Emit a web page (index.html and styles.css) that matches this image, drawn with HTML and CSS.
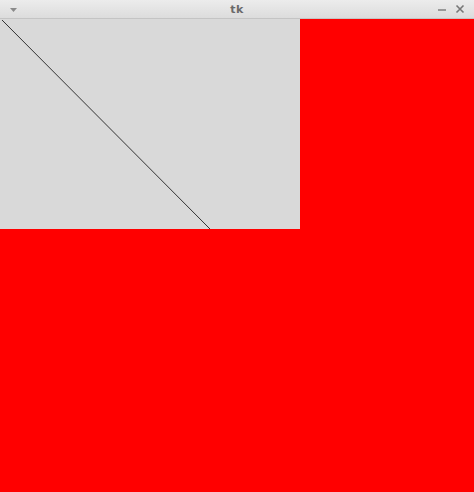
FILE: index.html
```html
<!DOCTYPE html>
<html>
<head>
<meta charset="utf-8">
<link rel="stylesheet" href="styles.css">
</head>
<body>
<div class="window">
  <div class="titlebar">
    <div class="menu-btn">
      <svg width="9" height="6" viewBox="0 0 9 6"><path d="M1 1 L8 1 L4.5 5 Z" fill="#8a8a8a"/></svg>
    </div>
    <div class="title">tk</div>
    <div class="controls">
      <svg width="10" height="10" viewBox="0 0 10 10"><path d="M1 6 H9" stroke="#777" stroke-width="1.4"/></svg>
      <svg width="10" height="10" viewBox="0 0 10 10"><path d="M1.5 1.5 L8.5 8.5 M8.5 1.5 L1.5 8.5" stroke="#777" stroke-width="1.6"/></svg>
    </div>
  </div>
  <div class="content">
    <div class="canvas">
      <svg width="300" height="210" viewBox="0 0 300 210"><line x1="2" y1="1" x2="210" y2="210" stroke="#333" stroke-width="1"/></svg>
    </div>
  </div>
</div>
</body>
</html>
```
FILE: styles.css
```css
html, body {
  margin: 0;
  padding: 0;
  width: 474px;
  height: 492px;
  overflow: hidden;
}
.window {
  width: 474px;
  height: 492px;
  display: flex;
  flex-direction: column;
  background: #ff0000;
}
.titlebar {
  height: 18px;
  flex: 0 0 18px;
  display: flex;
  align-items: center;
  justify-content: space-between;
  background: linear-gradient(#ececec, #dcdcdc);
  border-bottom: 1px solid #c4c4c4;
  font-family: "DejaVu Sans", sans-serif;
  font-weight: bold;
  font-size: 11px;
  color: #6a6a6a;
  position: relative;
}
.menu-btn {
  width: 26px;
  display: flex;
  justify-content: center;
  padding-top: 1px;
}
.title {
  position: absolute;
  left: 0;
  right: 0;
  text-align: center;
  top: 3px;
  letter-spacing: 0.5px;
}
.controls {
  display: flex;
  gap: 8px;
  padding-right: 9px;
  align-items: center;
}
.content {
  flex: 1;
  background: #ff0000;
}
.canvas {
  width: 300px;
  height: 210px;
  background: #d9d9d9;
}
.canvas svg {
  display: block;
}
```
